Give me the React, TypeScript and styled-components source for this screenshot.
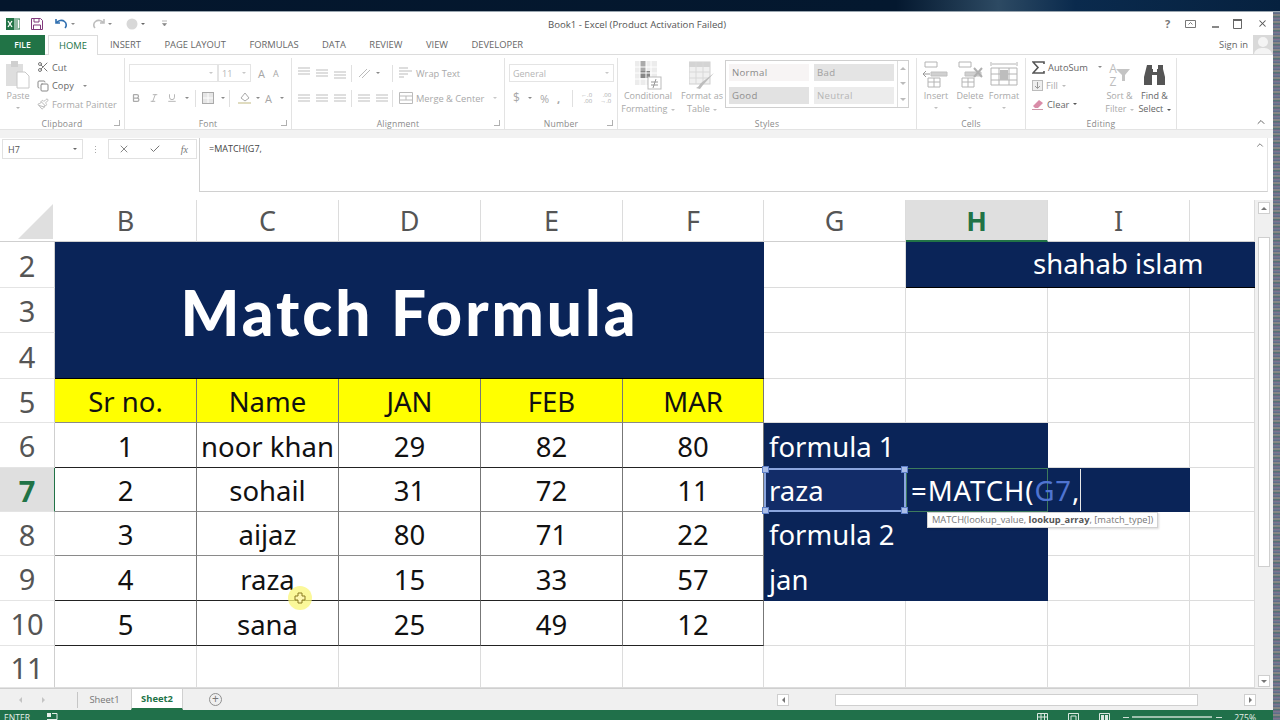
import React from "react";
import styled, { createGlobalStyle } from "styled-components";
import { ChevronUp, X, Check, Scissors, Copy, Paintbrush, Bold, Italic, Underline } from "lucide-react";

const GlobalStyle = createGlobalStyle`
  html, body {
    margin: 0;
    padding: 0;
    width: 1280px;
    height: 720px;
    overflow: hidden;
    background: #fff;
    font-family: "Open Sans", "Liberation Sans", sans-serif;
  }
`;

const NAVY = "#0a2458";
const GREEN = "#217346";
const FADED = "#a9a9a9";
const LABEL = "#8a8a8a";

const TopBand = styled.div`
  height: 12px;
  background: linear-gradient(90deg, #04162c 0%, #04182f 70%, #2d4a63 78%, #0a2a4d 84%, #06213f 100%);
  border-bottom: 1px solid #9aa6b0;
  box-sizing: border-box;
`;

const Desk = styled.div`
  display: flex;
  height: 708px;
`;

const Noise = styled.div`
  width: 7px;
  background: repeating-linear-gradient(0deg, #5d7c8e 0, #8a6f8e 2px, #3f6a72 3px, #9a8f86 5px, #4d5f88 7px);
`;

const Win = styled.div`
  width: 1273px;
  display: flex;
  flex-direction: column;
  overflow: hidden;
`;

const TitleBar = styled.div`
  height: 23px;
  position: relative;
  display: flex;
  align-items: center;
  padding-left: 6px;
  flex: none;
`;

const Qat = styled.div`
  display: flex;
  align-items: center;
  gap: 11px;
`;

const Nudge = styled.span<{ $l?: number; $flip?: boolean }>`
  display: inline-flex;
  align-items: center;
  flex: none;
  margin-left: ${(p) => p.$l ?? 0}px;
  ${(p) => (p.$flip ? "transform: scaleX(-1);" : "")}
`;

const Caret = styled.span<{ $c?: string; $m?: number; $t?: number }>`
  display: inline-block;
  width: 0;
  height: 0;
  flex: none;
  border-left: 2px solid transparent;
  border-right: 2px solid transparent;
  border-top: 2px solid ${(p) => p.$c || "#8a8a8a"};
  margin-left: ${(p) => p.$m ?? 3}px;
  margin-top: ${(p) => p.$t ?? 0}px;
  vertical-align: middle;
`;

const TitleText = styled.div`
  position: absolute;
  left: 548px;
  top: 6px;
  font-size: 9.6px;
  line-height: 13px;
  color: #555;
  white-space: nowrap;
`;

const WinButtons = styled.div`
  margin-left: auto;
  display: flex;
  align-items: center;
  gap: 11px;
  padding-right: 5px;
  color: #666;
`;

const Help = styled.span`
  font-size: 11px;
  font-weight: 700;
  color: #777;
  width: 13px;
  text-align: center;
`;

const TabBar = styled.div`
  height: 20px;
  display: flex;
  align-items: stretch;
  flex: none;
  border-bottom: 1px solid #dcdcdc;
  box-sizing: border-box;
`;

const FileTab = styled.div`
  width: 45px;
  height: 20px;
  background: ${GREEN};
  color: #fff;
  font-size: 8.6px;
  font-weight: 600;
  display: flex;
  align-items: center;
  justify-content: center;
`;

const HomeTab = styled.div`
  margin-left: 3px;
  width: 50px;
  height: 20px;
  box-sizing: border-box;
  background: #fff;
  border: 1px solid #dcdcdc;
  border-bottom: none;
  color: ${GREEN};
  font-size: 9.4px;
  display: flex;
  align-items: center;
  justify-content: center;
`;

const Tabs = styled.div`
  margin-left: 12px;
  display: flex;
  gap: 23.5px;
  align-items: center;
  font-size: 9.4px;
  color: #666;
  white-space: nowrap;
`;

const SignIn = styled.div`
  margin-left: auto;
  display: flex;
  align-items: center;
  gap: 5px;
  font-size: 9.4px;
  color: #666;
  height: 19px;
`;

const Avatar = styled.div`
  width: 20px;
  height: 19px;
  background: #d9d9d9;
  overflow: hidden;
`;

const Ribbon = styled.div`
  height: 75px;
  flex: none;
  display: flex;
  background: #fff;
  border-bottom: 1px solid #e3e3e3;
  box-sizing: border-box;
  position: relative;
`;

const Group = styled.div<{ $w: number }>`
  width: ${(p) => p.$w}px;
  flex: none;
  box-sizing: border-box;
  border-right: 1px solid #e3e3e3;
  display: flex;
  flex-direction: column;
  position: relative;
  margin-top: 3px;
`;

const GroupBody = styled.div<{ $gap?: number; $pl?: number }>`
  flex: 1;
  display: flex;
  gap: ${(p) => p.$gap ?? 0}px;
  padding-left: ${(p) => p.$pl ?? 0}px;
  min-height: 0;
`;

const GroupLabel = styled.div`
  height: 13px;
  line-height: 16px;
  font-size: 8.6px;
  letter-spacing: 0.2px;
  color: ${LABEL};
  text-align: center;
`;

const Launcher = styled.span`
  position: absolute;
  right: 4px;
  bottom: 3px;
  width: 5px;
  height: 5px;
  border-right: 1px solid #b0b0b0;
  border-bottom: 1px solid #b0b0b0;
`;

const Column = styled.div<{ $w?: number; $gap?: number; $pt?: number; $ml?: number }>`
  display: flex;
  flex-direction: column;
  ${(p) => (p.$w ? `width: ${p.$w}px;` : "")}
  gap: ${(p) => p.$gap ?? 0}px;
  padding-top: ${(p) => p.$pt ?? 0}px;
  margin-left: ${(p) => p.$ml ?? 0}px;
  flex: none;
`;

const BigButton = styled.div<{ $w: number; $dark?: boolean; $ml?: number }>`
  width: ${(p) => p.$w}px;
  flex: none;
  margin-left: ${(p) => p.$ml ?? 0}px;
  display: flex;
  flex-direction: column;
  align-items: center;
  font-size: 9px;
  line-height: 13px;
  color: ${(p) => (p.$dark ? "#666" : FADED)};
  white-space: nowrap;
  text-align: center;
`;

const BigIcon = styled.div`
  height: 30px;
  margin-top: 2px;
  margin-bottom: -1px;
  display: flex;
  align-items: center;
  justify-content: center;
  position: relative;
`;

const SortLetters = styled.span`
  display: flex;
  flex-direction: column;
  font-size: 12px;
  line-height: 13px;
  color: #bdbdbd;
  margin-right: -1px;
`;

const SmallRow = styled.div<{ $dark?: boolean; $h?: number; $ml?: number }>`
  display: flex;
  align-items: center;
  gap: 3px;
  height: ${(p) => p.$h ?? 18.5}px;
  margin-left: ${(p) => p.$ml ?? 0}px;
  font-size: 9.3px;
  color: ${(p) => (p.$dark ? "#666" : FADED)};
  white-space: nowrap;
`;

const ToolRow = styled.div<{ $gap?: number; $h?: number }>`
  display: flex;
  align-items: center;
  gap: ${(p) => p.$gap ?? 8}px;
  height: ${(p) => p.$h ?? 22}px;
  color: ${FADED};
  font-size: 9.3px;
  white-space: nowrap;
`;

const Combo = styled.div<{ $w: number; $ml?: number }>`
  width: ${(p) => p.$w}px;
  height: 18px;
  box-sizing: border-box;
  margin-left: ${(p) => p.$ml ?? 0}px;
  border: 1px solid #e4e4e4;
  display: flex;
  align-items: center;
  justify-content: space-between;
  padding: 0 4px 0 3px;
  font-size: 9px;
  color: #b5b5b5;
  flex: none;
`;

const Divider = styled.span<{ $ml?: number }>`
  width: 1px;
  height: 17px;
  background: #e0e0e0;
  flex: none;
  margin-left: ${(p) => p.$ml ?? 0}px;
`;

const Glyph = styled.span<{ $size?: number; $bold?: boolean; $ml?: number }>`
  font-size: ${(p) => p.$size ?? 11}px;
  font-weight: ${(p) => (p.$bold ? 700 : 400)};
  margin-left: ${(p) => p.$ml ?? 0}px;
  color: #a6a6a6;
  line-height: 1;
`;

const Decimals = styled.span<{ $ml?: number }>`
  display: flex;
  flex-direction: column;
  align-items: flex-end;
  margin-left: ${(p) => p.$ml ?? 0}px;
  font-size: 6px;
  line-height: 6px;
  color: #aaa;
`;

const Gallery = styled.div`
  margin: 2px 0 0 -3px;
  width: 184px;
  height: 48px;
  box-sizing: border-box;
  border: 1px solid #cfcfcf;
  display: flex;
  flex: none;
`;

const StyleGrid = styled.div`
  display: grid;
  grid-template-columns: 80px 80px;
  grid-auto-rows: 17px;
  column-gap: 5px;
  row-gap: 6px;
  padding: 3px 3px;
  flex: 1;
`;

const StyleChip = styled.div<{ $bg: string; $c: string }>`
  background: ${(p) => p.$bg};
  color: ${(p) => p.$c};
  font-size: 9.6px;
  letter-spacing: 0.3px;
  padding-left: 3px;
  line-height: 17px;
`;

const GalleryScroll = styled.div`
  width: 11px;
  border-left: 1px solid #dedede;
  display: grid;
  grid-template-rows: 1fr 1fr 1fr;
  justify-items: center;
  align-items: center;
`;

const Collapse = styled.div`
  position: absolute;
  right: 6px;
  bottom: 1px;
  color: #666;
  display: flex;
`;

const FormulaCollapse = styled(Collapse)`
  top: 2px;
  right: 2px;
  bottom: auto;
`;

const Gap = styled.div`
  height: 8px;
  flex: none;
  background: #f2f2f2;
`;

const FormulaBar = styled.div`
  height: 62px;
  flex: none;
  display: flex;
  align-items: flex-start;
  background: #fff;
  padding-left: 2px;
`;

const NameBox = styled.div`
  width: 81px;
  height: 20px;
  margin-top: 1px;
  box-sizing: border-box;
  border: 1px solid #e1e1e1;
  font-size: 9px;
  color: #555;
  display: flex;
  align-items: center;
  justify-content: space-between;
  padding: 0 5px;
`;

const Dots = styled.div`
  width: 25px;
  height: 20px;
  margin-top: 1px;
  display: flex;
  flex-direction: column;
  align-items: center;
  justify-content: center;
  gap: 2px;
  span {
    width: 1px;
    height: 1px;
    background: #aaa;
  }
`;

const FxBox = styled.div`
  width: 89px;
  height: 20px;
  margin-top: 1px;
  box-sizing: border-box;
  border: 1px solid #e1e1e1;
  display: flex;
  align-items: center;
  justify-content: space-between;
  padding: 0 8px 0 9px;
  color: #777;
`;

const Fx = styled.span`
  font-family: "Liberation Serif", serif;
  font-style: italic;
  font-size: 10px;
  color: #777;
`;

const FormulaInput = styled.div`
  margin-left: 2px;
  width: 1069px;
  height: 54px;
  box-sizing: border-box;
  border-left: 1px solid #d0d0d0;
  border-bottom: 1px solid #d0d0d0;
  border-right: 1px solid #e4e4e4;
  font-size: 9px;
  color: #444;
  padding: 4px 9px;
  position: relative;
`;

const SheetArea = styled.div`
  height: 488px;
  flex: none;
  display: flex;
  position: relative;
`;

const Grid = styled.div`
  width: 1255px;
  overflow: hidden;
  display: grid;
  grid-template-columns: 55px 142px 142px 142px 142px 141px 142px 142px 142px 65px;
  grid-template-rows: 42px 46px 45px 46px 44px 45px 44px 44px 45px 45px 42px;
  font-family: "Noto Sans", "Open Sans", sans-serif;
`;

const Corner = styled.div`
  border-bottom: 1px solid #cfcfcf;
  position: relative;
  display: flex;
  align-items: flex-end;
  justify-content: flex-end;
  padding: 0 2px 2px 0;
`;

const ColHead = styled.div<{ $active?: boolean }>`
  box-sizing: border-box;
  background: ${(p) => (p.$active ? "#dfdfdf" : "#fff")};
  color: ${(p) => (p.$active ? GREEN : "#555")};
  font-weight: ${(p) => (p.$active ? 700 : 400)};
  border-right: 1px solid #dcdcdc;
  border-bottom: ${(p) => (p.$active ? `2px solid ${GREEN}` : "1px solid #cfcfcf")};
  font-size: 27px;
  display: flex;
  align-items: center;
  justify-content: center;
`;

const RowHead = styled.div<{ $active?: boolean }>`
  box-sizing: border-box;
  background: ${(p) => (p.$active ? "#dfdfdf" : "#fff")};
  color: ${(p) => (p.$active ? GREEN : "#555")};
  font-weight: ${(p) => (p.$active ? 700 : 400)};
  border-right: ${(p) => (p.$active ? `1px solid ${GREEN}` : "1px solid #cfcfcf")};
  border-bottom: 1px solid #e4e4e4;
  font-size: 29px;
  padding-top: 1px;
  display: flex;
  align-items: center;
  justify-content: center;
`;

const Cell = styled.div`
  box-sizing: border-box;
  border-right: 1px solid #dcdcdc;
  border-bottom: 1px solid #dcdcdc;
  position: relative;
`;

const TitleCell = styled.div`
  grid-column: span 5;
  grid-row: span 3;
  background: ${NAVY};
  border-bottom: 1px solid #000;
  box-sizing: border-box;
  color: #fff;
  font-family: "Lato", sans-serif;
  font-weight: 900;
  font-size: 62px;
  letter-spacing: 3px;
  display: flex;
  align-items: center;
  justify-content: center;
  padding-top: 3px;
`;

const BannerCell = styled.div`
  grid-column: span 3;
  background: ${NAVY};
  border-bottom: 1px solid #000;
  border-left: 1px solid #000;
  box-sizing: border-box;
  color: #fff;
  font-size: 27.5px;
  padding-left: 127px;
  line-height: 44px;
  white-space: nowrap;
  overflow: hidden;
  margin-left: -1px;
`;

const TableCell = styled.div<{ $yellow?: boolean; $dark?: boolean }>`
  box-sizing: border-box;
  background: ${(p) => (p.$yellow ? "#ffff00" : "#fff")};
  border-right: 1px solid #777;
  border-bottom: 1px solid ${(p) => (p.$dark ? "#222" : "#8a8a8a")};
  color: #111;
  font-size: 27.5px;
  padding-top: 2px;
  display: flex;
  align-items: center;
  justify-content: center;
  white-space: nowrap;
  position: relative;
`;

const NavyCell = styled.div<{ $span?: number }>`
  grid-column: span ${(p) => p.$span ?? 1};
  background: ${NAVY};
  color: #fff;
  font-size: 27.5px;
  padding: 2px 0 0 5px;
  box-sizing: border-box;
  display: flex;
  align-items: center;
  white-space: nowrap;
  border-bottom: 1px solid ${NAVY};
`;

const SelectedCell = styled.div`
  background: #122c68;
  color: #fff;
  font-size: 27.5px;
  box-sizing: border-box;
  border: 2px solid #8aa5de;
  padding: 0 0 0 3px;
  display: flex;
  align-items: center;
  position: relative;
  z-index: 3;
`;

const Handle = styled.span<{ $x: "l" | "r"; $y: "t" | "b" }>`
  position: absolute;
  width: 5px;
  height: 5px;
  background: #a9bde8;
  border: 1px solid #5f80c8;
  ${(p) => (p.$x === "l" ? "left: -4px;" : "right: -4px;")}
  ${(p) => (p.$y === "t" ? "top: -4px;" : "bottom: -4px;")}
`;

const EditCell = styled.div`
  background: ${NAVY};
  border: 1px solid #3d7a5c;
  box-sizing: border-box;
  color: #fff;
  font-size: 27.5px;
  letter-spacing: 0.9px;
  padding-left: 4px;
  display: flex;
  align-items: center;
  white-space: nowrap;
  position: relative;
  z-index: 2;
`;

const EditText = styled.span`
  border-right: 1px solid #e8e8e8;
  line-height: 44px;
  height: 42px;
  flex: none;
`;

const RefText = styled.span`
  color: #4f74d0;
`;

const Tip = styled.div`
  position: absolute;
  left: 20px;
  top: 43px;
  width: 231px;
  height: 16px;
  box-sizing: border-box;
  background: #fff;
  border: 1px solid #d2d2d2;
  box-shadow: 1px 1px 2px rgba(0, 0, 0, 0.15);
  font-family: "Open Sans", sans-serif;
  font-size: 9.3px;
  letter-spacing: 0;
  line-height: 14px;
  color: #777;
  padding-left: 4px;
  white-space: nowrap;
  b {
    color: #555;
  }
`;

const Pointer = styled.div`
  position: absolute;
  left: 91px;
  top: 30px;
  width: 24px;
  height: 24px;
  border-radius: 50%;
  background: rgba(250, 245, 120, 0.75);
  display: flex;
  align-items: center;
  justify-content: center;
  z-index: 4;
`;

const VScroll = styled.div`
  width: 18px;
  flex: none;
  background: #f0f0f0;
  display: flex;
  flex-direction: column;
  align-items: center;
  padding: 2px 0 1px;
  box-sizing: border-box;
`;

const ScrollBtn = styled.div`
  width: 12px;
  height: 12px;
  flex: none;
  background: #fff;
  border: 1px solid #cfcfcf;
  box-sizing: border-box;
  display: flex;
  align-items: center;
  justify-content: center;
`;

const VThumb = styled.div`
  width: 12px;
  height: 330px;
  margin-top: 23px;
  background: #fff;
  border: 1px solid #cfcfcf;
  box-sizing: border-box;
`;

const Spacer = styled.div`
  flex: 1;
`;

const Arrow = styled.span<{ $dir: "up" | "down" | "left" | "right"; $c?: string }>`
  width: 0;
  height: 0;
  border: 3px solid transparent;
  ${(p) =>
    p.$dir === "up"
      ? `border-bottom-color: ${p.$c || "#777"}; border-top-width: 0;`
      : p.$dir === "down"
      ? `border-top-color: ${p.$c || "#777"}; border-bottom-width: 0;`
      : p.$dir === "left"
      ? `border-right-color: ${p.$c || "#777"}; border-left-width: 0;`
      : `border-left-color: ${p.$c || "#777"}; border-right-width: 0;`}
`;

const SheetBar = styled.div`
  height: 22px;
  flex: none;
  background: #f0f0f0;
  border-top: 1px solid #cfcfcf;
  box-sizing: border-box;
  display: flex;
  align-items: center;
  font-size: 9.4px;
  color: #777;
`;

const NavArrows = styled.div`
  width: 78px;
  height: 16px;
  box-sizing: border-box;
  border-right: 1px solid #c6c6c6;
  display: flex;
  align-items: center;
  gap: 20px;
  padding-left: 19px;
  flex: none;
`;

const SheetTab = styled.div<{ $active?: boolean }>`
  height: 21px;
  box-sizing: border-box;
  display: flex;
  align-items: center;
  justify-content: center;
  width: ${(p) => (p.$active ? 52 : 53)}px;
  background: ${(p) => (p.$active ? "#fff" : "transparent")};
  color: ${(p) => (p.$active ? GREEN : "#777")};
  font-weight: ${(p) => (p.$active ? 700 : 400)};
  border-bottom: ${(p) => (p.$active ? `2px solid ${GREEN}` : "none")};
  border-left: ${(p) => (p.$active ? "1px solid #d0d0d0" : "none")};
  border-right: ${(p) => (p.$active ? "1px solid #d0d0d0" : "none")};
  flex: none;
`;

const AddSheet = styled.div`
  margin-left: 26px;
  width: 13px;
  height: 13px;
  border: 1px solid #8f8f8f;
  border-radius: 50%;
  box-sizing: border-box;
  color: #777;
  font-size: 12px;
  line-height: 10px;
  text-align: center;
  flex: none;
`;

const HScroll = styled.div`
  margin-left: 555px;
  width: 479px;
  display: flex;
  align-items: center;
  flex: none;
`;

const HThumb = styled.div`
  margin-left: 46px;
  width: 363px;
  height: 12px;
  background: #fff;
  border: 1px solid #cfcfcf;
  box-sizing: border-box;
  flex: none;
`;

const StatusBar = styled.div`
  height: 10px;
  flex: none;
  background: #20704a;
  color: #e6efe9;
  font-size: 8.6px;
  display: flex;
  align-items: flex-start;
  overflow: hidden;
  position: relative;
  padding: 3px 0 0 4px;
  box-sizing: border-box;
`;

const StatusText = styled.span<{ $ml?: number }>`
  line-height: 12px;
  margin-top: -1px;
  margin-left: ${(p) => p.$ml ?? 0}px;
  flex: none;
`;

const MacroIcon = styled.span`
  margin-left: 17px;
  display: flex;
  flex: none;
`;

const StatusRight = styled.div`
  margin-left: auto;
  display: flex;
  align-items: flex-start;
  padding-right: 17px;
`;

const ViewIcons = styled.div`
  display: flex;
  gap: 20px;
  margin-right: 13px;
`;

const ZoomSlider = styled.div`
  display: flex;
  align-items: center;
  height: 8px;
  gap: 3px;
`;

const ZoomTick = styled.span`
  width: 6px;
  height: 1px;
  background: #cfe0d6;
  flex: none;
`;

const ZoomTrack = styled.span`
  width: 80px;
  height: 2px;
  background: #9dc0ad;
  margin-right: 1px;
  flex: none;
`;

const ic = { fill: "none", stroke: "#b4b4b4", strokeWidth: 1 };

const ExcelLogo = () => (
  <svg width="14" height="12" viewBox="0 0 14 12">
    <rect x="5" y="1" width="9" height="10" fill="#fff" stroke="#217346" />
    <path d="M8 3h4M8 5h4M8 7h4M8 9h4" stroke="#217346" />
    <rect x="0" y="0" width="8" height="12" fill="#217346" />
    <path d="M2 3l4 6M6 3l-4 6" stroke="#fff" strokeWidth="1.3" />
  </svg>
);

const SaveIcon = () => (
  <svg width="12" height="12" viewBox="0 0 12 12">
    <path d="M.5.5h9l2 2v9h-11z" fill="#fff" stroke="#80397b" />
    <path d="M3 .5v3.5h5V.5M2.5 11.5V7h7v4.5" fill="none" stroke="#80397b" />
  </svg>
);

const UndoIcon = ({ c }: { c: string }) => (
  <svg width="13" height="11" viewBox="0 0 13 11">
    <path d="M1 1v4h4M1.5 5C3 2.5 7 1.5 9.5 3.5s2 5 .5 6.5" fill="none" stroke={c} strokeWidth="1.6" />
  </svg>
);

const PasteIcon = () => (
  <svg width="24" height="30" viewBox="0 0 24 30">
    <rect x="0" y="4" width="17" height="22" fill="#dedede" />
    <rect x="5" y="1" width="7" height="6" fill="#cfcfcf" />
    <path d="M11 12h8l4 4v12H11z" fill="#fff" stroke="#c8c8c8" />
  </svg>
);

const CellsIcon = ({ kind }: { kind: string }) => (
  <svg width="28" height="30" viewBox="0 0 28 30">
    {kind === "format" ? (
      <>
        <path d="M1 8h26v17H1zM1 14h26M1 20h26M9 8v17M19 8v17" {...ic} />
        <rect x="10" y="10" width="8" height="10" fill="#bdbdbd" />
        <path d="M1 2v4M27 2v4M2 4h24" {...ic} />
      </>
    ) : (
      <>
        <path d="M3 2h12v5H3zM6 18h12v9H6zM6 22h12M12 18v9" {...ic} />
        <path d="M9 12h16v4H9z" fill="#d0d0d0" stroke="#c0c0c0" />
        {kind === "delete" ? (
          <path d="M18 8l8 9M26 8l-8 9" stroke="#b0b0b0" strokeWidth="2" fill="none" />
        ) : (
          <path d="M8 14H1M4 11l-3 3 3 3" stroke="#999" fill="none" />
        )}
      </>
    )}
  </svg>
);

const GridViewIcon = () => (
  <svg width="11" height="12" viewBox="0 0 11 12">
    <path d="M.5.5h10v11H.5zM.5 4h10M.5 8h10M4 .5v11M7.5.5v11" fill="none" stroke="#dbe8e0" />
  </svg>
);

const PageViewIcon = () => (
  <svg width="11" height="12" viewBox="0 0 11 12">
    <path d="M.5.5h10v11H.5zM3 3h5v8H3z" fill="none" stroke="#dbe8e0" />
  </svg>
);

const BreakViewIcon = () => (
  <svg width="11" height="12" viewBox="0 0 11 12">
    <path d="M.5.5h10v11H.5z" fill="none" stroke="#dbe8e0" />
    <path d="M2 2h3v8H2zM6 2h3v8H6z" fill="#dbe8e0" />
  </svg>
);

const COLUMNS = ["B", "C", "D", "E", "F", "G", "H", "I"];

const TABLE: string[][] = [
  ["1", "noor khan", "29", "82", "80"],
  ["2", "sohail", "31", "72", "11"],
  ["3", "aijaz", "80", "71", "22"],
  ["4", "raza", "15", "33", "57"],
  ["5", "sana", "25", "49", "12"],
];

const Clipboard = () => (
  <Group $w={125}>
    <GroupBody $pl={6}>
      <BigButton $w={24}>
        <BigIcon><PasteIcon /></BigIcon>
        Paste
        <Caret $c="#b5b5b5" $m={0} $t={5} />
      </BigButton>
      <Column $ml={7}>
        <SmallRow $dark><Scissors size={12} color="#777" />Cut</SmallRow>
        <SmallRow $dark><Copy size={12} color="#888" />Copy<Caret $m={6} /></SmallRow>
        <SmallRow><Paintbrush size={12} color="#bbb" />Format Painter</SmallRow>
      </Column>
    </GroupBody>
    <GroupLabel>Clipboard</GroupLabel>
    <Launcher />
  </Group>
);

const FontGroup = () => (
  <Group $w={167}>
    <GroupBody $pl={4}>
      <Column $pt={6} $gap={2}>
        <ToolRow $h={18} $gap={7}>
          <Combo $w={89}><span /><Caret $c="#c8c8c8" /></Combo>
          <Combo $w={33} $ml={-7}>11<Caret $c="#c8c8c8" /></Combo>
          <Glyph $size={11}>A</Glyph>
          <Glyph $size={9} $ml={1}>A</Glyph>
        </ToolRow>
        <ToolRow $gap={8} $h={28}>
          <Nudge $l={2}><Bold size={10} color="#aaa" strokeWidth={3} /></Nudge>
          <Italic size={10} color="#aaa" />
          <Underline size={10} color="#aaa" />
          <Caret $m={0} />
          <Divider $ml={-2} />
          <Nudge $l={-2}>
            <svg width="12" height="12" viewBox="0 0 12 12">
              <rect x=".5" y=".5" width="11" height="11" fill="#e6e6e6" stroke="#aaa" />
              <path d="M6 1v10M1 6h10" stroke="#fff" />
            </svg>
          </Nudge>
          <Caret $m={-1} />
          <Divider $ml={-4} />
          <svg width="13" height="12" viewBox="0 0 13 12">
            <path d="M3 6l4-5 4 5-4 3z" fill="none" stroke="#aaa" />
            <rect x="0" y="10" width="13" height="2" fill="#e0dcc0" />
          </svg>
          <Caret $m={-3} />
          <Glyph $size={11} $ml={-3}>A</Glyph>
          <Caret $m={0} />
        </ToolRow>
      </Column>
    </GroupBody>
    <GroupLabel>Font</GroupLabel>
    <Launcher />
  </Group>
);

const AlignLines = ({ top = 0 }: { top?: number }) => (
  <svg width="12" height="12" viewBox="0 0 12 12">
    <path d={`M0 ${top + 1}h12M0 ${top + 4}h12M0 ${top + 7}h12`} stroke="#bdbdbd" />
  </svg>
);

const Alignment = () => (
  <Group $w={213}>
    <GroupBody $pl={6}>
      <Column $pt={6} $gap={2}>
        <ToolRow $h={18} $gap={6}>
          <AlignLines /><AlignLines top={2} /><AlignLines top={4} />
          <Divider $ml={-1} />
          <svg width="14" height="12" viewBox="0 0 14 12"><path d="M1 10l8-8M4 11l8-8" stroke="#bbb" /></svg>
          <Caret $m={-2} />
          <Divider $ml={6} />
          <SmallRow $h={18}>
            <svg width="14" height="12" viewBox="0 0 14 12"><path d="M0 1h9M0 4h13M0 7h9M0 10h5" stroke="#bbb" /></svg>
            Wrap Text
          </SmallRow>
        </ToolRow>
        <ToolRow $h={28} $gap={6}>
          <AlignLines top={2} /><AlignLines top={2} /><AlignLines top={2} />
          <Divider $ml={-1} />
          <AlignLines top={2} /><AlignLines top={2} />
          <Divider $ml={-2} />
          <SmallRow $h={18}>
            <svg width="14" height="12" viewBox="0 0 14 12"><path d="M.5.5h13v11H.5zM0 4h13M0 8h13M7 4v4" fill="none" stroke="#bbb" /></svg>
            Merge &amp; Center<Caret $c="#c8c8c8" $m={6} />
          </SmallRow>
        </ToolRow>
      </Column>
    </GroupBody>
    <GroupLabel>Alignment</GroupLabel>
    <Launcher />
  </Group>
);

const NumberGroup = () => (
  <Group $w={113}>
    <GroupBody $pl={4}>
      <Column $pt={6} $gap={2}>
        <Combo $w={105}>General<Caret $c="#c8c8c8" /></Combo>
        <ToolRow $h={28} $gap={8}>
          <Glyph $size={12} $ml={4}>$</Glyph>
          <Caret $m={0} />
          <Glyph $size={11}>%</Glyph>
          <Glyph $size={11} $bold>,</Glyph>
          <Divider $ml={4} />
          <Decimals><span>←.0</span><span>.00</span></Decimals>
          <Decimals><span>.00</span><span>→.0</span></Decimals>
        </ToolRow>
      </Column>
    </GroupBody>
    <GroupLabel>Number</GroupLabel>
    <Launcher />
  </Group>
);

const CondIcon = () => (
  <svg width="27" height="29" viewBox="0 0 27 29">
    <rect x="0" y="0" width="22" height="24" fill="#ececec" />
    <rect x="5" y="0" width="6" height="10" fill="#aaa" />
    <rect x="5" y="10" width="10" height="7" fill="#888" />
    <path d="M0 6h22M0 12h22M0 18h22M5 0v24M11 0v24M16 0v24" stroke="#fff" />
    <rect x="13" y="16" width="13" height="12" fill="#fff" stroke="#bbb" />
    <path d="M16 21h7M16 24h7M21 18l-3 9" stroke="#999" />
  </svg>
);

const TableIcon = () => (
  <svg width="26" height="29" viewBox="0 0 26 29">
    <rect x="0" y="1" width="21" height="22" fill="#f0f0f0" stroke="#d0d0d0" />
    <rect x="0" y="1" width="21" height="5" fill="#d4d4d4" />
    <path d="M0 11h21M0 17h21M7 1v22M14 1v22" stroke="#d8d8d8" />
    <path d="M25 12L14 24l-3 4-4-1c3-1 3-3 5-5z" fill="#bdbdbd" />
  </svg>
);

const Styles = () => (
  <Group $w={299}>
    <GroupBody>
      <BigButton $w={56} $ml={2}>
        <BigIcon><CondIcon /></BigIcon>
        Conditional
        <span>Formatting <Caret $c="#c0c0c0" $m={1} /></span>
      </BigButton>
      <BigButton $w={52}>
        <BigIcon><TableIcon /></BigIcon>
        Format as
        <span>Table <Caret $c="#c0c0c0" $m={1} /></span>
      </BigButton>
      <Gallery>
        <StyleGrid>
          <StyleChip $bg="#f7f4f4" $c="#8a8a8a">Normal</StyleChip>
          <StyleChip $bg="#e4e4e4" $c="#a0a0a0">Bad</StyleChip>
          <StyleChip $bg="#e2e2e2" $c="#8f8f8f">Good</StyleChip>
          <StyleChip $bg="#ececec" $c="#b5b5b5">Neutral</StyleChip>
        </StyleGrid>
        <GalleryScroll>
          <Arrow $dir="up" $c="#bbb" />
          <Arrow $dir="down" $c="#bbb" />
          <Arrow $dir="down" $c="#bbb" />
        </GalleryScroll>
      </Gallery>
    </GroupBody>
    <GroupLabel>Styles</GroupLabel>
  </Group>
);

const CellsGroup = () => (
  <Group $w={109}>
    <GroupBody $pl={2}>
      <BigButton $w={34}><BigIcon><CellsIcon kind="insert" /></BigIcon>Insert<Caret $c="#c0c0c0" $m={0} $t={5} /></BigButton>
      <BigButton $w={34}><BigIcon><CellsIcon kind="delete" /></BigIcon>Delete<Caret $c="#c0c0c0" $m={0} $t={5} /></BigButton>
      <BigButton $w={34}><BigIcon><CellsIcon kind="format" /></BigIcon>Format<Caret $c="#c0c0c0" $m={0} $t={5} /></BigButton>
    </GroupBody>
    <GroupLabel>Cells</GroupLabel>
  </Group>
);

const Editing = () => (
  <Group $w={151}>
    <GroupBody $pl={6}>
      <Column $w={71}>
        <SmallRow $dark>
          <svg width="13" height="13" viewBox="0 0 13 13"><path d="M12 3V1H1l5 5.5L1 12h11v-2" fill="none" stroke="#555" strokeWidth="1.6" /></svg>
          AutoSum<Caret $m={7} />
        </SmallRow>
        <SmallRow>
          <svg width="11" height="11" viewBox="0 0 11 11"><rect x=".5" y=".5" width="10" height="10" fill="#eee" stroke="#bbb" /><path d="M5.5 2v6M3 6l2.5 2.5L8 6" stroke="#999" fill="none" /></svg>
          Fill<Caret $c="#bbb" $m={1} />
        </SmallRow>
        <SmallRow $dark>
          <svg width="12" height="12" viewBox="0 0 12 12"><path d="M1 8l6-6 4 3-5 5H3z" fill="#d98ca8" /><path d="M0 11.5h11" stroke="#c9a" /></svg>
          Clear<Caret $c="#555" $m={1} />
        </SmallRow>
      </Column>
      <BigButton $w={33}>
        <BigIcon>
          <SortLetters><span>A</span><span>Z</span></SortLetters>
          <svg width="14" height="16" viewBox="0 0 14 16"><path d="M0 2H14L9 8V14H6V8Z" fill="#c4c4c4" /></svg>
        </BigIcon>
        Sort &amp;
        <span>Filter <Caret $c="#c0c0c0" $m={1} /></span>
      </BigButton>
      <BigButton $w={37} $dark>
        <BigIcon>
          <svg width="22" height="20" viewBox="0 0 22 20"><path d="M3 0h5v4h1v3h4V4h1V0h5v4l2 8v8h-8V10h-5v10H0v-8l2-8z" fill="#555" /></svg>
        </BigIcon>
        Find &amp;
        <span>Select <Caret $c="#555" $m={1} /></span>
      </BigButton>
    </GroupBody>
    <GroupLabel>Editing</GroupLabel>
  </Group>
);

export default function App() {
  return (
    <>
      <GlobalStyle />
      <TopBand />
      <Desk>
        <Win>
          <TitleBar>
            <Qat>
              <ExcelLogo />
              <SaveIcon />
              <Nudge $l={1}><UndoIcon c="#2f6fb0" /><Caret /></Nudge>
              <Nudge $l={6} $flip><Caret $m={0} /><Nudge $l={3}><UndoIcon c="#bdbdbd" /></Nudge></Nudge>
              <Nudge $l={3}>
                <svg width="12" height="12"><circle cx="6" cy="6" r="5.5" fill="#d8d8d8" /></svg>
                <Caret $c="#666" />
              </Nudge>
              <Nudge $l={6}>
                <svg width="5" height="7" viewBox="0 0 5 7">
                  <path d="M0 1h5M.5 3.5h4l-2 2.5z" stroke="#888" fill="#888" strokeWidth=".6" />
                </svg>
              </Nudge>
            </Qat>
            <TitleText>Book1 - Excel (Product Activation Failed)</TitleText>
            <WinButtons>
              <Help>?</Help>
              <svg width="11" height="8" viewBox="0 0 11 8"><path d="M.5.5h10v7H.5zM3.5 4.5l2-2 2 2" fill="none" stroke="#777" /></svg>
              <Nudge $l={2}><svg width="13" height="10" viewBox="0 0 13 10"><path d="M3 8h7" stroke="#555" strokeWidth="1.4" /></svg></Nudge>
              <svg width="11" height="10" viewBox="0 0 11 10"><path d="M.5 1.5h8v8h-8z" fill="none" stroke="#666" /><path d="M0 1h9" stroke="#666" strokeWidth="2" /></svg>
              <Nudge $l={2}><X size={11} color="#555" strokeWidth={2.2} /></Nudge>
            </WinButtons>
          </TitleBar>
          <TabBar>
            <FileTab>FILE</FileTab>
            <HomeTab>HOME</HomeTab>
            <Tabs>
              <span>INSERT</span>
              <span>PAGE LAYOUT</span>
              <span>FORMULAS</span>
              <span>DATA</span>
              <span>REVIEW</span>
              <span>VIEW</span>
              <span>DEVELOPER</span>
            </Tabs>
            <SignIn>
              Sign in
              <Avatar>
                <svg width="20" height="19" viewBox="0 0 20 19">
                  <circle cx="10" cy="7" r="5" fill="#f4f4f4" />
                  <path d="M1 19c1-5 5-6 9-6s8 1 9 6z" fill="#f4f4f4" />
                </svg>
              </Avatar>
            </SignIn>
          </TabBar>
          <Ribbon>
            <Clipboard />
            <FontGroup />
            <Alignment />
            <NumberGroup />
            <Styles />
            <CellsGroup />
            <Editing />
            <Collapse><ChevronUp size={12} /></Collapse>
          </Ribbon>
          <Gap />
          <FormulaBar>
            <NameBox>H7<Caret $c="#666" /></NameBox>
            <Dots><span /><span /><span /></Dots>
            <FxBox>
              <X size={12} color="#888" />
              <Check size={12} color="#777" />
              <Fx>fx</Fx>
            </FxBox>
            <FormulaInput>
              =MATCH(G7,
              <FormulaCollapse><ChevronUp size={10} /></FormulaCollapse>
            </FormulaInput>
          </FormulaBar>
          <SheetArea>
            <Grid>
              <Corner>
                <svg width="35" height="35" viewBox="0 0 35 35"><path d="M35 0v35H0z" fill="#dfdfdf" /></svg>
              </Corner>
              {COLUMNS.map((c) => (
                <ColHead key={c} $active={c === "H"}>{c}</ColHead>
              ))}
              <ColHead />

              <RowHead>2</RowHead>
              <TitleCell>Match Formula</TitleCell>
              <Cell />
              <BannerCell>shahab islam</BannerCell>

              {[3, 4].map((n) => (
                <React.Fragment key={n}>
                  <RowHead>{n}</RowHead>
                  {Array.from({ length: 4 }, (_, i) => <Cell key={i} />)}
                </React.Fragment>
              ))}

              <RowHead>5</RowHead>
              {["Sr no.", "Name", "JAN", "FEB", "MAR"].map((h) => (
                <TableCell key={h} $yellow>{h}</TableCell>
              ))}
              {Array.from({ length: 4 }, (_, i) => <Cell key={i} />)}

              <RowHead>6</RowHead>
              {TABLE[0].map((v, i) => <TableCell key={i} $dark>{v}</TableCell>)}
              <NavyCell $span={2}>formula 1</NavyCell>
              <Cell />
              <Cell />

              <RowHead $active>7</RowHead>
              {TABLE[1].map((v, i) => <TableCell key={i}>{v}</TableCell>)}
              <SelectedCell>
                raza
                <Handle $x="l" $y="t" />
                <Handle $x="r" $y="t" />
                <Handle $x="l" $y="b" />
                <Handle $x="r" $y="b" />
              </SelectedCell>
              <EditCell>
                <EditText>=MATCH(<RefText>G7</RefText>,</EditText>
                <Tip>MATCH(lookup_value, <b>lookup_array</b>, [match_type])</Tip>
              </EditCell>
              <NavyCell />
              <Cell />

              <RowHead>8</RowHead>
              {TABLE[2].map((v, i) => <TableCell key={i}>{v}</TableCell>)}
              <NavyCell $span={2}>formula 2</NavyCell>
              <Cell />
              <Cell />

              <RowHead>9</RowHead>
              {TABLE[3].map((v, i) => (
                <TableCell key={i} $dark>
                  {v}
                  {i === 1 && (
                    <Pointer>
                      <svg width="12" height="12" viewBox="0 0 12 12">
                        <path d="M4 1h4v3h3v4H8v3H4V8H1V4h3z" fill="#fdf6b0" stroke="#8a7a20" />
                      </svg>
                    </Pointer>
                  )}
                </TableCell>
              ))}
              <NavyCell $span={2}>jan</NavyCell>
              <Cell />
              <Cell />

              <RowHead>10</RowHead>
              {TABLE[4].map((v, i) => <TableCell key={i} $dark>{v}</TableCell>)}
              {Array.from({ length: 4 }, (_, i) => <Cell key={i} />)}

              <RowHead>11</RowHead>
              {Array.from({ length: 9 }, (_, i) => <Cell key={i} />)}
            </Grid>
            <VScroll>
              <ScrollBtn><Arrow $dir="up" /></ScrollBtn>
              <VThumb />
              <Spacer />
              <ScrollBtn><Arrow $dir="down" /></ScrollBtn>
            </VScroll>
          </SheetArea>
          <SheetBar>
            <NavArrows>
              <Arrow $dir="left" $c="#c4c4c4" />
              <Arrow $dir="right" $c="#c4c4c4" />
            </NavArrows>
            <SheetTab>Sheet1</SheetTab>
            <SheetTab $active>Sheet2</SheetTab>
            <AddSheet>+</AddSheet>
            <HScroll>
              <ScrollBtn><Arrow $dir="left" /></ScrollBtn>
              <HThumb />
              <Spacer />
              <ScrollBtn><Arrow $dir="right" /></ScrollBtn>
            </HScroll>
          </SheetBar>
          <StatusBar>
            <StatusText>ENTER</StatusText>
            <MacroIcon>
              <svg width="11" height="8" viewBox="0 0 11 8">
                <rect x="0" y="0" width="4" height="4" fill="#e6efe9" />
                <path d="M5 .5h5v6H5M0 6.5h8" fill="none" stroke="#e6efe9" />
              </svg>
            </MacroIcon>
            <StatusRight>
              <ViewIcons>
                <GridViewIcon />
                <PageViewIcon />
                <BreakViewIcon />
              </ViewIcons>
              <ZoomSlider>
                <ZoomTick />
                <ZoomTrack />
                <ZoomTick />
              </ZoomSlider>
              <StatusText $ml={12}>275%</StatusText>
            </StatusRight>
          </StatusBar>
        </Win>
        <Noise />
      </Desk>
    </>
  );
}
